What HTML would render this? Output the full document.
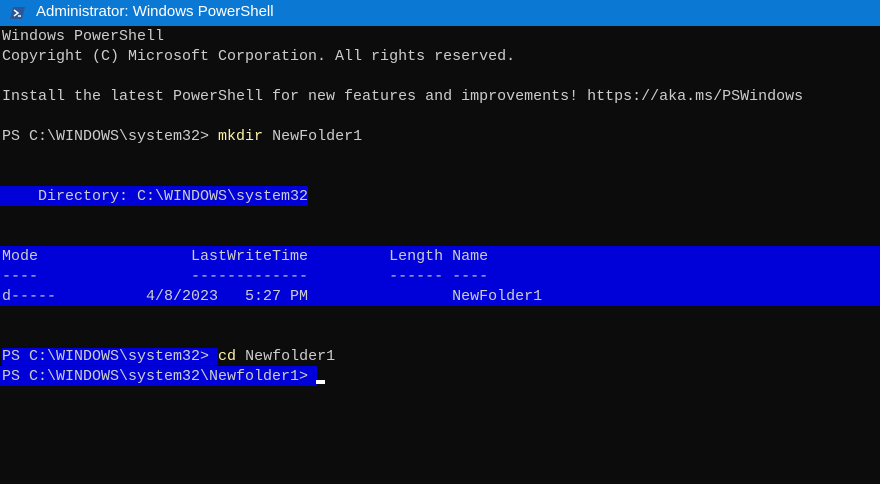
<!DOCTYPE html>
<html><head><style>
body{margin:0;width:880px;height:484px;overflow:hidden;background:#0c0c0c;font-family:"Liberation Mono",monospace;}
#t{position:absolute;left:0;top:0;width:880px;height:26px;background:#0b78d4;color:#fff;font:15px "Liberation Sans",sans-serif;}
#t span{position:absolute;left:36px;top:3px;}
.l{position:absolute;left:2px;height:20px;line-height:21px;font-size:15px;color:#cccccc;white-space:pre;}
.hb{background:#0000d8;}
.y{color:#f9f1a5;}
</style></head><body>
<div id="t"><svg style="position:absolute;left:10px;top:5px" width="16" height="16" viewBox="0 0 16 16"><path d="M3 2 L15 2 L12 14 L0 14 Z" fill="#2b5797"/><path d="M4 5 L8 8 L4 11" stroke="#fff" stroke-width="1.5" fill="none"/><path d="M8 11 H11" stroke="#fff" stroke-width="1.5"/></svg><span>Administrator: Windows PowerShell</span></div>
<div class="l" style="top:26px">Windows PowerShell</div>
<div class="l" style="top:46px">Copyright (C) Microsoft Corporation. All rights reserved.</div>
<div class="l" style="top:86px">Install the latest PowerShell for new features and improvements! https://aka.ms/PSWindows</div>
<div class="l" style="top:126px">PS C:\WINDOWS\system32> <span class="y">mkdir</span> NewFolder1</div>
<div class="l hb" style="top:186px;left:0;padding-left:2px">    Directory: C:\WINDOWS\system32</div>
<div class="hb" style="position:absolute;left:0;top:246px;width:880px;height:60px"></div>
<div class="l" style="top:246px">Mode                 LastWriteTime         Length Name</div>
<div class="l" style="top:266px">----                 -------------         ------ ----</div>
<div class="l" style="top:286px">d-----          4/8/2023   5:27 PM                NewFolder1</div>
<div class="l" style="top:346px;left:0;padding-left:2px"><span class="hb">PS C:\WINDOWS\system32> </span><span class="y">cd</span> Newfolder1</div>
<div class="l hb" style="top:366px;left:0;padding-left:2px">PS C:\WINDOWS\system32\Newfolder1> </div>
<div style="position:absolute;left:316px;top:380px;width:9px;height:4px;background:#fff"></div>
</body></html>
